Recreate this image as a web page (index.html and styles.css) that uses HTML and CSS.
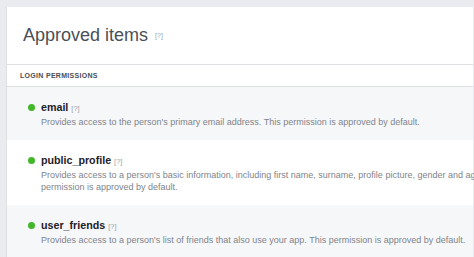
FILE: index.html
```html
<!DOCTYPE html>
<html lang="en">
  <head>
    <meta charset="UTF-8" />
    <title>Approved items</title>
    <link rel="stylesheet" href="styles.css">
  </head>
  <body>
    <div class="card">
      <div class="card-head">
        <h1>Approved items <span class="help">[?]</span></h1>
      </div>
      <div class="section-title">Login Permissions</div>

      <div class="perm gray">
        <div class="perm-name"><span class="dot"></span>email <span class="help">[?]</span></div>
        <p>Provides access to the person's primary email address. This permission is approved by default.</p>
      </div>
      <div class="perm">
        <div class="perm-name"><span class="dot"></span>public_profile <span class="help">[?]</span></div>
        <p>Provides access to a person's basic information, including first name, surname, profile picture, gender and age range. This permission is approved by default.</p>
      </div>
      <div class="perm gray">
        <div class="perm-name"><span class="dot"></span>user_friends <span class="help">[?]</span></div>
        <p>Provides access to a person's list of friends that also use your app. This permission is approved by default.</p>
      </div>
    </div>
  </body>
</html>
```

FILE: styles.css
```css
body {
  font-family: "Liberation Sans", Arial, sans-serif;
  background: #e9ebee;
  margin: 0;
  padding: 7px 0 0 6px;
  overflow: hidden;
}
.card {
  width: 466px;
  background: #fff;
  border-left: 1px solid #dddfe2;
  border-bottom: 1px solid #dddfe2;
}
.card-head {
  height: 57px;
  border-bottom: 1px solid #dddfe2;
  display: flex;
  align-items: center;
  padding-left: 16px;
}
h1 {
  margin: 0;
  font-size: 18px;
  font-weight: normal;
  color: #4b4f56;
}
h1 .help {
  font-size: 7px;
  vertical-align: 3px;
  margin-left: 2px;
}
.help {
  color: #a0a4ab;
  font-weight: normal;
  font-size: 7.5px;
}
.section-title {
  height: 21px;
  line-height: 21px;
  border-bottom: 1px solid #dddfe2;
  padding-left: 13px;
  font-size: 7px;
  font-weight: bold;
  letter-spacing: 0.3px;
  text-transform: uppercase;
  color: #4b4f56;
}
.perm {
  padding: 14px 0 12px 34px;
}
.perm.gray {
  background: #f6f7f9;
}
.perm-name {
  position: relative;
  font-size: 10.7px;
  font-weight: bold;
  color: #1d2129;
  line-height: 13px;
}
.dot {
  position: absolute;
  left: -13px;
  top: 3px;
  width: 7px;
  height: 7px;
  border-radius: 50%;
  background: #42b72a;
}
.perm p {
  margin: 1px 0 0;
  font-size: 9px;
  line-height: 12px;
  color: #80848b;
  width: 500px;
}
```
